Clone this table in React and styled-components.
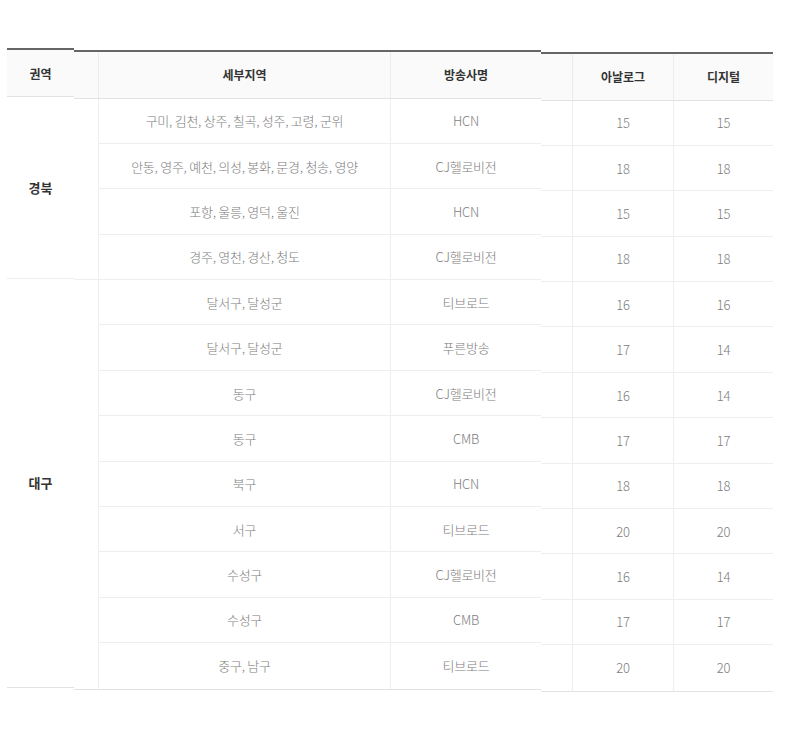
import React from "react";
import styled, { createGlobalStyle } from "styled-components";

const Global = createGlobalStyle`
  html, body { margin: 0; padding: 0; background: #fff; }
  body { font-family: "Noto Sans CJK KR", "Noto Sans", sans-serif; }
`;

const ROW_H = 45.4;

const groups = [
  {
    name: "경북",
    rows: [
      ["구미, 김천, 상주, 칠곡, 성주, 고령, 군위", "HCN", 15, 15],
      ["안동, 영주, 예천, 의성, 봉화, 문경, 청송, 영양", "CJ헬로비전", 18, 18],
      ["포항, 울릉, 영덕, 울진", "HCN", 15, 15],
      ["경주, 영천, 경산, 청도", "CJ헬로비전", 18, 18],
    ],
  },
  {
    name: "대구",
    rows: [
      ["달서구, 달성군", "티브로드", 16, 16],
      ["달서구, 달성군", "푸른방송", 17, 14],
      ["동구", "CJ헬로비전", 16, 14],
      ["동구", "CMB", 17, 17],
      ["북구", "HCN", 18, 18],
      ["서구", "티브로드", 20, 20],
      ["수성구", "CJ헬로비전", 16, 14],
      ["수성구", "CMB", 17, 17],
      ["중구, 남구", "티브로드", 20, 20],
    ],
  },
];

const allRows = groups.flatMap((g) => g.rows);

const Page = styled.div`
  display: flex;
  align-items: flex-start;
  padding: 48px 0 0 7px;
`;

const Table = styled.div`
  display: flex;
  flex-direction: column;
  width: ${(p) => p.$w}px;
  margin-top: ${(p) => p.$offset || 0}px;
  border-top: 2px solid #666;
  border-bottom: 1px solid #e2e2e2;
`;

const HeadRow = styled.div`
  display: flex;
  height: 46px;
  background: #fafafa;
  border-bottom: 1px solid #e2e2e2;
`;

const BodyRow = styled.div`
  display: flex;
  height: ${(p) => p.$h}px;
  box-sizing: border-box;
  border-bottom: ${(p) => (p.$last ? "none" : "1px solid #eeeeee")};
`;

const Body = styled.div`
  display: flex;
  flex-direction: column;
`;

const Cell = styled.div`
  flex: 0 0 ${(p) => p.$w}px;
  width: ${(p) => p.$w}px;
  display: flex;
  align-items: center;
  justify-content: center;
  box-sizing: border-box;
  border-left: ${(p) => (p.$line ? "1px solid #eeeeee" : "none")};
  font-size: 13px;
  font-weight: 300;
  color: #7d7d7d;
  letter-spacing: -0.25px;
  white-space: nowrap;
`;

const HeadCell = styled(Cell)`
  font-size: 12px;
  color: #333;
  font-weight: 700;
  letter-spacing: -0.1px;
  border-left-color: #ececec;
`;

const GroupCell = styled(Cell)`
  color: #333;
  font-weight: 700;
  font-size: 13px;
  letter-spacing: 0;
`;

const SpacerGroup = styled.div`
  width: ${(p) => p.$w}px;
  height: ${(p) => p.$h}px;
  box-sizing: border-box;
  border-bottom: ${(p) => (p.$last ? "none" : "1px solid #eeeeee")};
`;

const Split = styled.div`
  display: flex;
`;

const Stack = styled.div`
  display: flex;
  flex-direction: column;
`;

export default function App() {
  return (
    <>
      <Global />
      <Page>
        <Table $w={67}>
          <HeadRow>
            <HeadCell $w={67}>권역</HeadCell>
          </HeadRow>
          <Body>
            {groups.map((g, i) => (
              <BodyRow key={g.name} $h={g.rows.length * ROW_H} $last={i === groups.length - 1}>
                <GroupCell $w={67}>{g.name}</GroupCell>
              </BodyRow>
            ))}
          </Body>
        </Table>

        <Table $w={467} $offset={1.5}>
          <HeadRow>
            <HeadCell $w={24} />
            <HeadCell $w={292} $line>세부지역</HeadCell>
            <HeadCell $w={151} $line>방송사명</HeadCell>
          </HeadRow>
          <Split>
            <Stack>
              {groups.map((g, i) => (
                <SpacerGroup key={g.name} $w={24} $h={g.rows.length * ROW_H} $last={i === groups.length - 1} />
              ))}
            </Stack>
            <Stack>
              {allRows.map((r, i) => (
                <BodyRow key={i} $h={ROW_H} $last={i === allRows.length - 1}>
                  <Cell $w={292} $line>{r[0]}</Cell>
                  <Cell $w={151} $line>{r[1]}</Cell>
                </BodyRow>
              ))}
            </Stack>
          </Split>
        </Table>

        <Table $w={232} $offset={3.5}>
          <HeadRow>
            <HeadCell $w={31} />
            <HeadCell $w={101} $line>아날로그</HeadCell>
            <HeadCell $w={100} $line>디지털</HeadCell>
          </HeadRow>
          <Body>
            {allRows.map((r, i) => (
              <BodyRow key={i} $h={ROW_H} $last={i === allRows.length - 1}>
                <Cell $w={31} />
                <Cell $w={101} $line>{r[2]}</Cell>
                <Cell $w={100} $line>{r[3]}</Cell>
              </BodyRow>
            ))}
          </Body>
        </Table>
      </Page>
    </>
  );
}
